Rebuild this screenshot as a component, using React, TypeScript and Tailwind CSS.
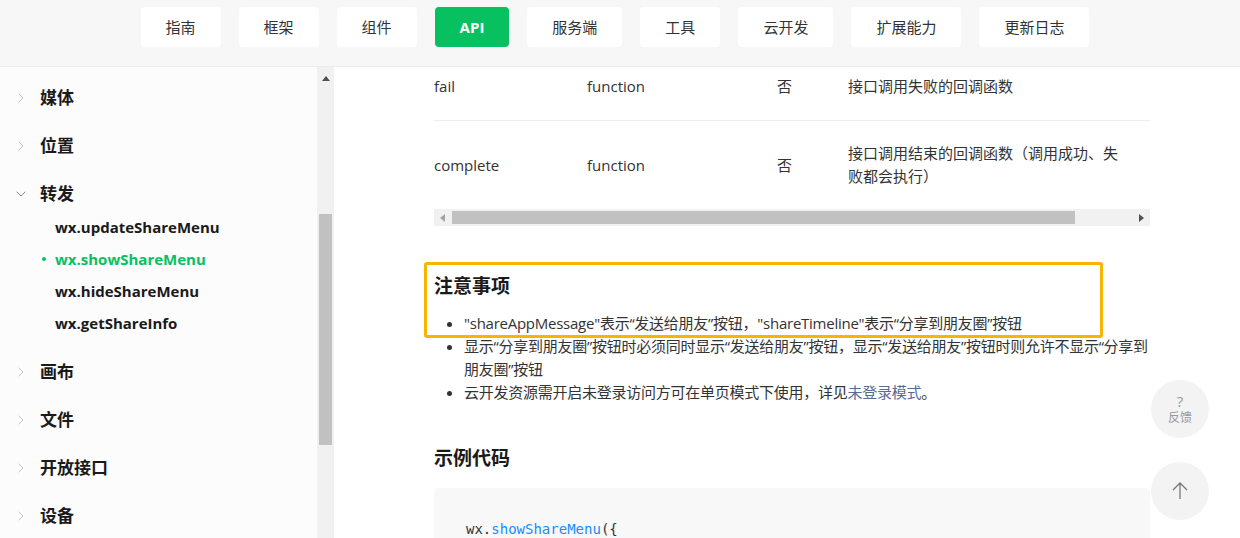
import { ChevronRight, ChevronDown } from "lucide-react";

const tabs = ["指南", "框架", "组件", "API", "服务端", "工具", "云开发", "扩展能力", "更新日志"];

const font = { fontFamily: '"Open Sans", "Noto Sans CJK SC", sans-serif' };

function NavItem({ label, open }: { label: string; open?: boolean }) {
  return (
    <div className="flex h-12 items-center">
      <div className="flex w-10 justify-center pl-[2px]">
        {open ? (
          <ChevronDown className="h-4 w-4 text-[#888]" strokeWidth={1.5} />
        ) : (
          <ChevronRight className="h-4 w-4 text-[#c4c4c4]" strokeWidth={1.5} />
        )}
      </div>
      <span className="text-[17px] font-bold text-[#1a1a1a]">{label}</span>
    </div>
  );
}

function SubItem({ label, active }: { label: string; active?: boolean }) {
  return (
    <div className="relative flex h-8 items-center pl-[55px]">
      {active && <span className="absolute left-[42px] h-[4px] w-[4px] rounded-full bg-[#07c160]" />}
      <span className={`text-[15px] font-bold ${active ? "text-[#07c160]" : "text-[#1a1a1a]"}`}>{label}</span>
    </div>
  );
}

export default function App() {
  return (
    <div className="relative h-[538px] w-[1240px] overflow-hidden bg-white" style={font}>
      {/* top nav */}
      <div className="flex h-[67px] items-start justify-center gap-[18px] border-b border-[#ededed] bg-[#f7f7f7] pt-[7px] pr-[10px]">
        {tabs.map((t) => (
          <div
            key={t}
            className={`flex h-10 items-center rounded-[4px] px-[25px] text-[15px] ${
              t === "API" ? "bg-[#07c160] font-bold text-white" : "bg-white text-[#333]"
            }`}
          >
            {t}
          </div>
        ))}
      </div>

      <div className="flex h-[471px]">
        {/* sidebar */}
        <div className="w-[317px] bg-[#fcfcfc] pt-[7px]">
          <NavItem label="媒体" />
          <NavItem label="位置" />
          <NavItem label="转发" open />
          <div className="-mt-[7px] mb-[9px]">
            <SubItem label="wx.updateShareMenu" />
            <SubItem label="wx.showShareMenu" active />
            <SubItem label="wx.hideShareMenu" />
            <SubItem label="wx.getShareInfo" />
          </div>
          <NavItem label="画布" />
          <NavItem label="文件" />
          <NavItem label="开放接口" />
          <NavItem label="设备" />
        </div>

        {/* sidebar scrollbar */}
        <div className="flex w-[17px] flex-col bg-[#f1f1f1]">
          <div className="flex h-[17px] items-center justify-center pt-[6px]">
            <svg width="8" height="5" viewBox="0 0 8 5">
              <polygon points="4,0 8,5 0,5" fill="#505050" />
            </svg>
          </div>
          <div className="mx-[2px] mt-[130px] h-[231px] bg-[#c1c1c1]" />
        </div>

        {/* main */}
        <div className="relative w-[816px] pl-[100px] text-[15px] text-[#333]">
          <div className="w-[716px]">
            <div className="flex items-center border-b border-[#ececec] pt-[8px] pb-[22px] leading-[23px]">
              <div className="w-[153px]">fail</div>
              <div className="w-[190px]">function</div>
              <div className="w-[71px]">否</div>
              <div>接口调用失败的回调函数</div>
            </div>
            <div className="flex h-[88px] items-center leading-[23px]">
              <div className="w-[153px]">complete</div>
              <div className="w-[190px]">function</div>
              <div className="w-[71px]">否</div>
              <div className="w-[282px]">接口调用结束的回调函数（调用成功、失败都会执行）</div>
            </div>
            {/* horizontal scrollbar */}
            <div className="flex h-[17px] items-center bg-[#f1f1f1]">
              <div className="flex w-[17px] justify-center">
                <svg width="5" height="8" viewBox="0 0 5 8">
                  <polygon points="0,4 5,0 5,8" fill="#a3a3a3" />
                </svg>
              </div>
              <div className="ml-[1px] h-[13px] w-[623px] bg-[#c1c1c1]" />
              <div className="flex-1" />
              <div className="flex w-[17px] justify-center">
                <svg width="5" height="8" viewBox="0 0 5 8">
                  <polygon points="5,4 0,0 0,8" fill="#505050" />
                </svg>
              </div>
            </div>

            <h2 className="mt-[47px] text-[19px] leading-[26px] font-bold text-[#1a1a1a]">注意事项</h2>
            <ul className="mt-[13px] w-[724px] list-disc pl-[30px] leading-[23px] tracking-[-0.25px] marker:text-[#333]">
              <li>"shareAppMessage"表示“发送给朋友”按钮，"shareTimeline"表示“分享到朋友圈”按钮</li>
              <li>显示“分享到朋友圈”按钮时必须同时显示“发送给朋友”按钮，显示“发送给朋友”按钮时则允许不显示“分享到朋友圈”按钮</li>
              <li>
                云开发资源需开启未登录访问方可在单页模式下使用，详见<span className="text-[#576b95]">未登录模式</span>。
              </li>
            </ul>

            <h2 className="mt-[41px] text-[19px] leading-[26px] font-bold text-[#1a1a1a]">示例代码</h2>
            <div className="mt-[17px] h-[80px] rounded-[4px] bg-[#f8f8f8] pt-[31px] pl-[32px]">
              <pre className="text-[14px] leading-[20px] text-[#333]" style={{ fontFamily: '"DejaVu Sans Mono", monospace' }}>
                wx.<span className="text-[#1a8cff]">showShareMenu</span>({"{"}
              </pre>
            </div>
          </div>

          {/* annotation box */}
          <div className="absolute top-[195px] left-[90px] h-[76px] w-[679px] rounded-[3px] border-[3px] border-[#f7b500]" />
        </div>
      </div>

      {/* floating buttons */}
      <div className="absolute top-[380px] left-[1151px] flex h-[58px] w-[58px] flex-col items-center justify-center rounded-full bg-[#f3f3f3] text-[#999]">
        <span className="text-[15px] leading-[15px]">?</span>
        <span className="mt-[3px] text-[12px] leading-[12px]">反馈</span>
      </div>
      <div className="absolute top-[462px] left-[1151px] flex h-[58px] w-[58px] items-center justify-center rounded-full bg-[#f3f3f3]">
        <svg width="16" height="18" viewBox="0 0 16 18" fill="none" stroke="#777" strokeWidth="1.3">
          <path d="M8 17V1M1 8l7-7 7 7" />
        </svg>
      </div>
    </div>
  );
}
